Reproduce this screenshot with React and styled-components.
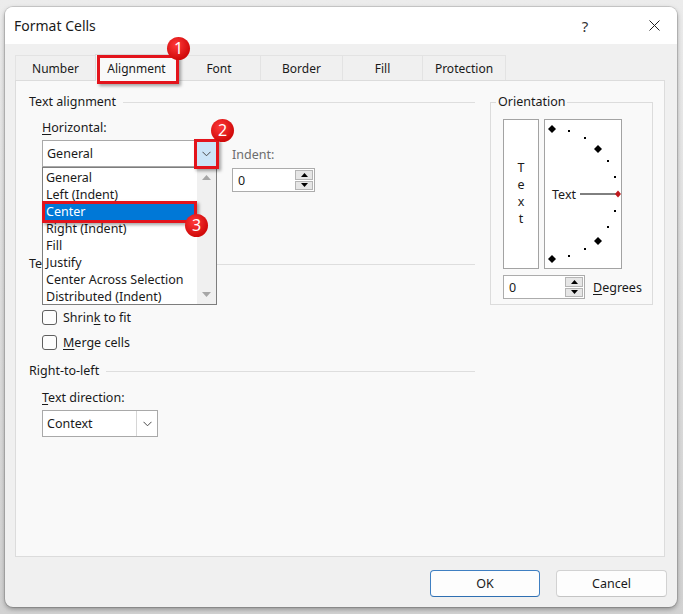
import React from "react";
import styled, { createGlobalStyle } from "styled-components";

const GlobalStyle = createGlobalStyle`
  html, body { margin: 0; padding: 0; }
  body {
    background: #e2e2e2;
    font-family: "Noto Sans", "Open Sans", sans-serif;
    font-size: 12.5px;
    color: #000;
  }
  * { box-sizing: border-box; }
`;

const Page = styled.div`
  width: 683px;
  height: 614px;
  padding: 7px 6px 7px 5px;
  background: linear-gradient(#ececec, #d2d2d2);
`;

const Dialog = styled.div`
  width: 672px;
  height: 600px;
  border-radius: 8px;
  overflow: hidden;
  display: flex;
  flex-direction: column;
  background: #f0f0f0;
  box-shadow: 0 0 0 1px rgba(0, 0, 0, 0.12), 0 2px 5px rgba(0, 0, 0, 0.35);
`;

const TitleBar = styled.div`
  height: 37px;
  flex: none;
  background: #fff;
  display: flex;
  align-items: center;
  padding-left: 9px;
`;

const Title = styled.div`
  flex: 1;
  font-size: 14px;
  color: #1a1a1a;
`;

const TitleButton = styled.div`
  width: 46px;
  height: 37px;
  display: flex;
  align-items: center;
  justify-content: center;
  font-size: 15px;
  color: #333;
  margin-right: ${(p) => p.$mr || 0}px;
`;

const Body = styled.div`
  flex: 1;
  display: flex;
  flex-direction: column;
  padding: 11px 10px 10px;
`;

const TabRow = styled.div`
  display: flex;
  height: 25px;
  align-items: flex-end;
  position: relative;
  z-index: 2;
`;

const Tab = styled.div`
  position: relative;
  width: ${(p) => p.$w}px;
  height: ${(p) => (p.$active ? 27 : 25)}px;
  margin-bottom: ${(p) => (p.$active ? -1 : 0)}px;
  margin-left: -1px;
  display: flex;
  align-items: center;
  justify-content: center;
  padding-top: 1px;
  background: ${(p) => (p.$active ? "#f9f9f9" : "#f0f0f0")};
  border: 1px solid ${(p) => (p.$active ? "#dcdcdc" : "#e3e3e3")};
  border-bottom: none;
  font-size: 12px;
  color: #1a1a1a;
  &:first-child { margin-left: 0; }
`;

const Annot = styled.div`
  position: absolute;
  top: ${(p) => p.$t}px;
  left: ${(p) => p.$l}px;
  width: ${(p) => p.$w}px;
  height: ${(p) => p.$h}px;
  border: 3px solid #e3141c;
  box-shadow: 2px 2px 3px rgba(0, 0, 0, 0.35);
  pointer-events: none;
  z-index: 8;
`;

const Badge = styled.div`
  position: absolute;
  top: ${(p) => p.$t}px;
  left: ${(p) => p.$l}px;
  width: 23px;
  height: 23px;
  border-radius: 50%;
  background: radial-gradient(circle at 40% 35%, #ff3a3a, #d10a0a 70%);
  color: #fff;
  font-size: 16px;
  line-height: 23px;
  text-align: center;
  font-family: "Noto Sans", sans-serif;
  z-index: 9;
`;

const Panel = styled.div`
  width: 650px;
  height: 477px;
  flex: none;
  background: #f9f9f9;
  border: 1px solid #dcdcdc;
  display: flex;
  gap: 15px;
  padding: 13px 11px 0 13px;
  position: relative;
  z-index: 1;
`;

const LeftCol = styled.div`
  width: 446px;
  display: flex;
  flex-direction: column;
`;

const SectionHeader = styled.div`
  display: flex;
  align-items: center;
  gap: 7px;
  height: 16px;
  line-height: 16px;
  margin-top: ${(p) => p.$mt || 0}px;
  color: #1a1a1a;
  &::after {
    content: "";
    flex: 1;
    height: 1px;
    background: #dedede;
  }
`;

const FieldLabel = styled.div`
  height: 16px;
  line-height: 16px;
  padding-left: ${(p) => (p.$indent ? 13 : 0)}px;
  margin-top: ${(p) => p.$mt || 0}px;
  color: ${(p) => (p.$disabled ? "#6d6d6d" : "#1a1a1a")};
`;

const Key = styled.span`
  text-decoration: underline;
  text-underline-offset: 2px;
`;

const Row = styled.div`
  display: flex;
  align-items: flex-start;
  padding-left: 13px;
  margin-top: ${(p) => p.$mt || 0}px;
`;

const SelectBox = styled.div`
  position: relative;
  width: ${(p) => p.$w}px;
  height: 27px;
  flex: none;
  background: #fff;
  border: 1px solid #a9a9a9;
  display: flex;
  align-items: stretch;
  margin-left: ${(p) => (p.$indent ? 13 : 0)}px;
  margin-top: ${(p) => p.$mt || 0}px;
`;

const SelectValue = styled.div`
  flex: 1;
  padding-left: 4px;
  display: flex;
  align-items: center;
  color: #1a1a1a;
`;

const SelectButton = styled.div`
  width: 21px;
  display: flex;
  align-items: center;
  justify-content: center;
  background: ${(p) => (p.$open ? "#cce4f7" : "#fff")};
  border-left: 1px solid ${(p) => (p.$open ? "#8fbbe6" : "#d6d6d6")};
`;

const DropList = styled.div`
  position: absolute;
  left: -1px;
  top: 26px;
  width: 175px;
  height: 138px;
  background: #fff;
  border: 1px solid #7d7d7d;
  display: flex;
  z-index: 5;
`;

const Items = styled.div`
  flex: 1;
  display: flex;
  flex-direction: column;
  padding-top: 1px;
`;

const Item = styled.div`
  position: relative;
  height: 17px;
  line-height: 17px;
  padding-left: 3px;
  white-space: nowrap;
  background: ${(p) => (p.$selected ? "#0078d7" : "transparent")};
  color: ${(p) => (p.$selected ? "#fff" : "#1a1a1a")};
`;

const ScrollTrack = styled.div`
  width: 19px;
  background: #f0f0f0;
  display: flex;
  flex-direction: column;
  justify-content: space-between;
  align-items: center;
  padding: 7px 0 7px;
`;

const IndentGroup = styled.div`
  display: flex;
  flex-direction: column;
  margin-left: 15px;
  margin-top: 7px;
`;

const SpinBox = styled.div`
  width: ${(p) => p.$w}px;
  height: 24px;
  margin-top: ${(p) => p.$mt || 0}px;
  background: #fff;
  border: 1px solid #acacac;
  display: flex;
  flex: none;
`;

const SpinValue = styled.div`
  flex: 1;
  padding-left: 5px;
  display: flex;
  align-items: center;
  color: #1a1a1a;
`;

const SpinButtons = styled.div`
  width: 19px;
  display: flex;
  flex-direction: column;
  padding: 1px 1px 1px 0;
  gap: 1px;
`;

const SpinBtn = styled.div`
  flex: 1;
  background: #e6e6e6;
  border: 1px solid #b5b5b5;
  display: flex;
  align-items: center;
  justify-content: center;
`;

const CheckRow = styled.div`
  display: flex;
  align-items: center;
  gap: 6px;
  height: 17px;
  padding-left: 13px;
  margin-top: ${(p) => p.$mt || 0}px;
  color: #1a1a1a;
`;

const Checkbox = styled.div`
  width: 15px;
  height: 15px;
  border: 1px solid #5f5f5f;
  border-radius: 3px;
  background: #fdfdfd;
`;

const Fieldset = styled.fieldset`
  margin: 0;
  width: 163px;
  height: 211px;
  min-width: 0;
  padding: 9px 0 0 12px;
  border: 1px solid #dcdcdc;
  align-self: flex-start;
`;

const Legend = styled.legend`
  padding: 0 2px;
  margin-left: -7px;
  line-height: 16px;
  color: #1a1a1a;
`;

const OrientRow = styled.div`
  display: flex;
  gap: 5px;
`;

const VertTextBox = styled.div`
  width: 36px;
  height: 150px;
  background: #fff;
  border: 1px solid #a3a3a3;
  display: flex;
  flex-direction: column;
  align-items: center;
  justify-content: center;
  padding-bottom: 2px;
`;

const VertLetter = styled.div`
  height: 17px;
  line-height: 17px;
  color: #1a1a1a;
`;

const DialBox = styled.div`
  width: 78px;
  height: 150px;
  background: #fff;
  border: 1px solid #a3a3a3;
  display: flex;
`;

const DegreesRow = styled.div`
  display: flex;
  align-items: center;
  gap: 8px;
  margin-top: 6px;
  color: #1a1a1a;
`;

const Footer = styled.div`
  display: flex;
  justify-content: flex-end;
  gap: 16px;
  margin-top: 13px;
`;

const Button = styled.div`
  width: ${(p) => p.$w}px;
  height: 27px;
  display: flex;
  align-items: center;
  justify-content: center;
  background: #fdfdfd;
  border: 1px solid ${(p) => (p.$primary ? "#3f7fc2" : "#d2d2d2")};
  border-bottom-color: ${(p) => (p.$primary ? "#2f6fb2" : "#c4c4c4")};
  border-radius: 4px;
  color: #1a1a1a;
`;

const Chevron = () => (
  <svg width="9" height="6" viewBox="0 0 9 6">
    <path d="M0.5 0.8 L4.5 4.8 L8.5 0.8" fill="none" stroke="#4a4a4a" strokeWidth="1" />
  </svg>
);

const Tri = ({ up, color = "#000", w = 7, h = 4 }) => (
  <svg width={w} height={h} viewBox={`0 0 ${w} ${h}`}>
    <polygon
      points={up ? `0,${h} ${w / 2},0 ${w},${h}` : `0,0 ${w / 2},${h} ${w},0`}
      fill={color}
    />
  </svg>
);

const Spinner = ({ w, mt, value }) => (
  <SpinBox $w={w} $mt={mt}>
    <SpinValue>{value}</SpinValue>
    <SpinButtons>
      <SpinBtn>
        <Tri up />
      </SpinBtn>
      <SpinBtn>
        <Tri />
      </SpinBtn>
    </SpinButtons>
  </SpinBox>
);

const Dial = () => {
  const big = [
    [7, 9],
    [53, 29],
    [53, 121],
    [7, 139],
  ];
  const small = [
    [24, 11],
    [40, 18],
    [63, 41],
    [70, 57],
    [70, 91],
    [63, 107],
    [40, 129],
    [24, 136],
  ];
  return (
    <svg width="76" height="148" viewBox="0 0 76 148">
      {big.map(([x, y]) => (
        <polygon key={`b${x}-${y}`} points={`${x},${y - 4} ${x + 4},${y} ${x},${y + 4} ${x - 4},${y}`} fill="#000" />
      ))}
      {small.map(([x, y]) => (
        <rect key={`s${x}-${y}`} x={x - 1} y={y - 1} width="2" height="2" fill="#000" />
      ))}
      <line x1="35" y1="74" x2="71" y2="74" stroke="#000" strokeWidth="1" />
      <polygon points="73,70.5 76,74 73,77.5 70,74" fill="#c0171b" />
      <text x="7" y="78.5" fontSize="12.5" fontFamily="Noto Sans, sans-serif" fill="#1a1a1a">
        Text
      </text>
    </svg>
  );
};

const tabs = [
  { label: "Number", w: 81 },
  { label: "Alignment", w: 83, active: true },
  { label: "Font", w: 84 },
  { label: "Border", w: 83 },
  { label: "Fill", w: 81 },
  { label: "Protection", w: 84 },
];

const options = [
  "General",
  "Left (Indent)",
  "Center",
  "Right (Indent)",
  "Fill",
  "Justify",
  "Center Across Selection",
  "Distributed (Indent)",
];

export default function App() {
  return (
    <>
      <GlobalStyle />
      <Page>
        <Dialog>
          <TitleBar>
            <Title>Format Cells</Title>
            <TitleButton $mr={23}>?</TitleButton>
            <TitleButton>
              <svg width="11" height="11" viewBox="0 0 11 11">
                <path d="M0.5 0.5 L10.5 10.5 M10.5 0.5 L0.5 10.5" stroke="#222" strokeWidth="1" />
              </svg>
            </TitleButton>
          </TitleBar>
          <Body>
            <TabRow>
              {tabs.map((t) => (
                <Tab key={t.label} $w={t.w} $active={t.active}>
                  {t.label}
                  {t.active && (
                    <>
                      <Annot $t={0} $l={1} $w={82} $h={29} />
                      <Badge $t={-18} $l={71}>1</Badge>
                    </>
                  )}
                </Tab>
              ))}
            </TabRow>
            <Panel>
              <LeftCol>
                <SectionHeader>Text alignment</SectionHeader>
                <FieldLabel $indent $mt={10}>
                  <Key>H</Key>orizontal:
                </FieldLabel>
                <Row $mt={4}>
                  <SelectBox $w={175}>
                    <SelectValue>General</SelectValue>
                    <SelectButton $open>
                      <Chevron />
                    </SelectButton>
                    <Annot $t={-2} $l={151} $w={25} $h={30} />
                    <Badge $t={-22} $l={168}>2</Badge>
                    <DropList>
                      <Items>
                        {options.map((o) => (
                          <Item key={o} $selected={o === "Center"}>
                            {o}
                            {o === "Center" && (
                              <>
                                <Annot $t={-2} $l={-1} $w={155} $h={22} />
                                <Badge $t={11} $l={142}>3</Badge>
                              </>
                            )}
                          </Item>
                        ))}
                      </Items>
                      <ScrollTrack>
                        <Tri up color="#a6a6a6" w={9} h={5} />
                        <Tri color="#a6a6a6" w={9} h={5} />
                      </ScrollTrack>
                    </DropList>
                  </SelectBox>
                  <IndentGroup>
                    <FieldLabel $disabled>Indent:</FieldLabel>
                    <Spinner w={83} mt={5} value="0" />
                  </IndentGroup>
                </Row>
                <SectionHeader $mt={64}>Text control</SectionHeader>
                <CheckRow $mt={37}>
                  <Checkbox />
                  <span>
                    Shrin<Key>k</Key> to fit
                  </span>
                </CheckRow>
                <CheckRow $mt={8}>
                  <Checkbox />
                  <span>
                    <Key>M</Key>erge cells
                  </span>
                </CheckRow>
                <SectionHeader $mt={12}>Right-to-left</SectionHeader>
                <FieldLabel $indent $mt={11}>
                  <Key>T</Key>ext direction:
                </FieldLabel>
                <SelectBox $w={116} $indent $mt={4}>
                  <SelectValue>Context</SelectValue>
                  <SelectButton>
                    <Chevron />
                  </SelectButton>
                </SelectBox>
              </LeftCol>
              <Fieldset>
                <Legend>Orientation</Legend>
                <OrientRow>
                  <VertTextBox>
                    <VertLetter>T</VertLetter>
                    <VertLetter>e</VertLetter>
                    <VertLetter>x</VertLetter>
                    <VertLetter>t</VertLetter>
                  </VertTextBox>
                  <DialBox>
                    <Dial />
                  </DialBox>
                </OrientRow>
                <DegreesRow>
                  <Spinner w={82} value="0" />
                  <span>
                    <Key>D</Key>egrees
                  </span>
                </DegreesRow>
              </Fieldset>
            </Panel>
            <Footer>
              <Button $w={110} $primary>
                OK
              </Button>
              <Button $w={111}>Cancel</Button>
            </Footer>
          </Body>
        </Dialog>
      </Page>
    </>
  );
}
